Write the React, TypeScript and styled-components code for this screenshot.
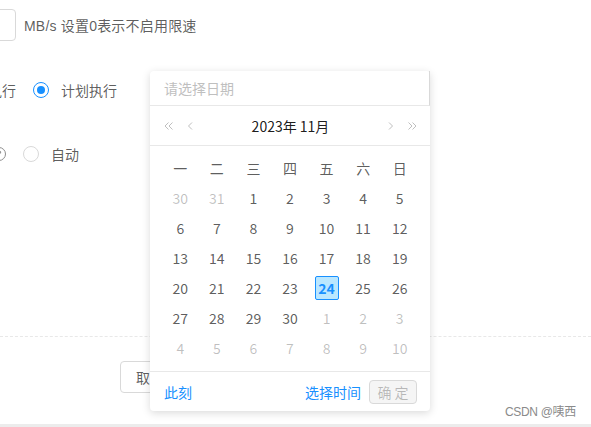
import styled, { createGlobalStyle } from "styled-components";

const GlobalStyle = createGlobalStyle`
  html, body {
    margin: 0;
    padding: 0;
    background: #fff;
  }
  body {
    font-family: "Liberation Sans", "Noto Sans CJK SC", sans-serif;
    font-size: 14px;
    color: rgba(0, 0, 0, 0.65);
    overflow: hidden;
  }
`;

// --- 页面 ---
const Page = styled.div`
  position: relative;
  width: 591px;
  height: 427px;
  display: flex;
  flex-direction: column;
  overflow: hidden;
`;

const Content = styled.div`
  flex: 1;
  padding-top: 9px;
  display: flex;
  flex-direction: column;
`;

const BottomBar = styled.div`
  height: 3px;
  background: #ececec;
`;

const FormRow = styled.div<{ $top?: number; $shift?: number }>`
  display: flex;
  align-items: center;
  height: 32px;
  margin-top: ${(p) => p.$top ?? 0}px;
  margin-left: ${(p) => p.$shift ?? 0}px;
`;

const NumberInput = styled.div`
  width: 80px;
  height: 30px;
  border: 1px solid #d9d9d9;
  border-radius: 4px;
  margin-right: 8px;
  flex-shrink: 0;
`;

const Hint = styled.span`
  color: rgba(0, 0, 0, 0.65);
  white-space: nowrap;
  letter-spacing: 0.2px;
`;

const RadioItem = styled.label`
  display: flex;
  align-items: center;
  gap: 12px;
  margin-right: 17px;
  white-space: nowrap;
  flex-shrink: 0;
  color: rgba(0, 0, 0, 0.65);
`;

const RadioCircle = styled.span<{ $checked?: boolean }>`
  width: 14px;
  height: 14px;
  border-radius: 50%;
  border: 1px solid ${(p) => (p.$checked ? "#1890ff" : "#d9d9d9")};
  display: flex;
  align-items: center;
  justify-content: center;
  flex-shrink: 0;

  &::after {
    content: "";
    width: 8px;
    height: 8px;
    border-radius: 50%;
    background: #1890ff;
    display: ${(p) => (p.$checked ? "block" : "none")};
  }
`;

const HelpIcon = styled.svg`
  margin-right: 17px;
  flex-shrink: 0;
  color: #8c8c8c;
`;

const Divider = styled.div`
  margin-top: 166px;
  border-top: 1px dashed #e8e8e8;
`;

const ActionRow = styled.div`
  display: flex;
  padding-left: 120px;
  margin-top: 24px;
`;

const Button = styled.button`
  height: 32px;
  padding: 0 15px;
  border: 1px solid #d9d9d9;
  border-radius: 4px;
  background: #fff;
  font: inherit;
  color: rgba(0, 0, 0, 0.65);
`;

const Watermark = styled.div`
  position: absolute;
  right: 15px;
  bottom: 8px;
  font-size: 12px;
  letter-spacing: -0.3px;
  color: #8a8a8a;
  font-family: "Liberation Sans", "Noto Sans CJK SC", sans-serif;
`;

// --- 日期选择弹层 ---
const Picker = styled.div`
  position: absolute;
  left: 150px;
  top: 71px;
  width: 280px;
  background: #fff;
  border-radius: 4px;
  box-shadow: 0 2px 8px rgba(0, 0, 0, 0.15);
  font-family: "Noto Sans CJK SC", "Liberation Sans", sans-serif;
`;

const PickerInput = styled.div`
  height: 34px;
  padding: 0 14px;
  display: flex;
  align-items: center;
  color: #bfbfbf;
  border-bottom: 1px solid #e8e8e8;
  border-right: 1px solid #d9d9d9;
`;

const Header = styled.div`
  height: 39px;
  display: flex;
  align-items: center;
  padding: 0 12px 0 13px;
  border-bottom: 1px solid #e8e8e8;
`;

const NavGroup = styled.div`
  display: flex;
  align-items: center;
  gap: 12px;
  color: #bfbfbf;
`;

const Title = styled.div`
  flex: 1;
  text-align: center;
  font-weight: 400;
  color: rgba(0, 0, 0, 0.9);
`;

const Body = styled.div`
  padding: 7px 12px 8px;
`;

const Grid = styled.div`
  display: grid;
  grid-template-columns: repeat(7, 1fr);
  grid-auto-rows: 30px;
`;

const WeekDay = styled.div`
  display: flex;
  align-items: center;
  justify-content: center;
  color: rgba(0, 0, 0, 0.65);
`;

const DayCell = styled.div<{ $muted?: boolean; $today?: boolean }>`
  display: flex;
  align-items: center;
  justify-content: center;

  span {
    width: 24px;
    height: 24px;
    box-sizing: border-box;
    display: flex;
    align-items: center;
    justify-content: center;
    border-radius: 2px;
    color: ${(p) =>
      p.$today ? "#1890ff" : p.$muted ? "rgba(0,0,0,0.25)" : "rgba(0,0,0,0.65)"};
    background: ${(p) => (p.$today ? "#bae7ff" : "transparent")};
    border: 1px solid ${(p) => (p.$today ? "#1890ff" : "transparent")};
    font-weight: ${(p) => (p.$today ? 700 : 400)};
  }
`;

const Footer = styled.div`
  height: 39px;
  border-top: 1px solid #e8e8e8;
  display: flex;
  align-items: center;
  padding: 0 13px 0 14px;
`;

const Link = styled.span`
  color: #1890ff;
`;

const Spacer = styled.div`
  flex: 1;
`;

const OkButton = styled.button`
  height: 24px;
  width: 48px;
  margin-left: 8px;
  padding: 0;
  border: 1px solid #d9d9d9;
  border-radius: 4px;
  background: #f5f5f5;
  color: rgba(0, 0, 0, 0.25);
  font: inherit;
  letter-spacing: 3px;
  text-indent: 3px;
`;

const Chevron = ({ dir, double }: { dir: "l" | "r"; double?: boolean }) => {
  const single = dir === "l" ? "M7 1.5 3.5 5 7 8.5" : "M3 1.5 6.5 5 3 8.5";
  const twin =
    dir === "l"
      ? "M5.5 1.5 2 5l3.5 3.5M9.5 1.5 6 5l3.5 3.5"
      : "M0.5 1.5 4 5 0.5 8.5M4.5 1.5 8 5 4.5 8.5";
  return (
    <svg width="10" height="10" viewBox="0 0 10 10" fill="none">
      <path d={double ? twin : single} stroke="currentColor" strokeWidth="1" />
    </svg>
  );
};

const weekDays = ["一", "二", "三", "四", "五", "六", "日"];

type Day = { n: number; muted: boolean };

const buildDays = (): Day[] => {
  const days: Day[] = [{ n: 30, muted: true }, { n: 31, muted: true }];
  for (let i = 1; i <= 30; i++) days.push({ n: i, muted: false });
  for (let i = 1; days.length < 42; i++) days.push({ n: i, muted: true });
  return days;
};

function App() {
  const days = buildDays();

  return (
    <>
      <GlobalStyle />
      <Page>
        <Content>
          <FormRow $shift={-66}>
            <NumberInput />
            <Hint>MB/s 设置0表示不启用限速</Hint>
          </FormRow>

          <FormRow $top={33} $shift={-68}>
            <RadioItem>
              <RadioCircle />
              立即执行
            </RadioItem>
            <RadioItem>
              <RadioCircle $checked />
              计划执行
            </RadioItem>
          </FormRow>

          <FormRow $top={32} $shift={-8}>
            <HelpIcon width="14" height="14" viewBox="0 0 14 14" fill="none">
              <circle cx="7" cy="7" r="6.5" stroke="currentColor" />
              <path
                d="M5.3 5.4a1.7 1.7 0 1 1 2.4 1.5c-.5.3-.7.6-.7 1.1v.5"
                stroke="currentColor"
              />
              <circle cx="7" cy="10.3" r=".7" fill="currentColor" />
            </HelpIcon>
            <RadioItem>
              <RadioCircle />
              自动
            </RadioItem>
          </FormRow>

          <Divider />

          <ActionRow>
            <Button>取消</Button>
          </ActionRow>
        </Content>
        <BottomBar />

        <Watermark>CSDN @咦西</Watermark>

        <Picker>
          <PickerInput>请选择日期</PickerInput>
          <Header>
            <NavGroup>
              <Chevron dir="l" double />
              <Chevron dir="l" />
            </NavGroup>
            <Title>2023年 11月</Title>
            <NavGroup>
              <Chevron dir="r" />
              <Chevron dir="r" double />
            </NavGroup>
          </Header>
          <Body>
            <Grid>
              {weekDays.map((d) => (
                <WeekDay key={d}>{d}</WeekDay>
              ))}
              {days.map((d, i) => (
                <DayCell
                  key={i}
                  $muted={d.muted}
                  $today={!d.muted && d.n === 24}
                >
                  <span>{d.n}</span>
                </DayCell>
              ))}
            </Grid>
          </Body>
          <Footer>
            <Link>此刻</Link>
            <Spacer />
            <Link>选择时间</Link>
            <OkButton>确定</OkButton>
          </Footer>
        </Picker>
      </Page>
    </>
  );
}

export default App;
